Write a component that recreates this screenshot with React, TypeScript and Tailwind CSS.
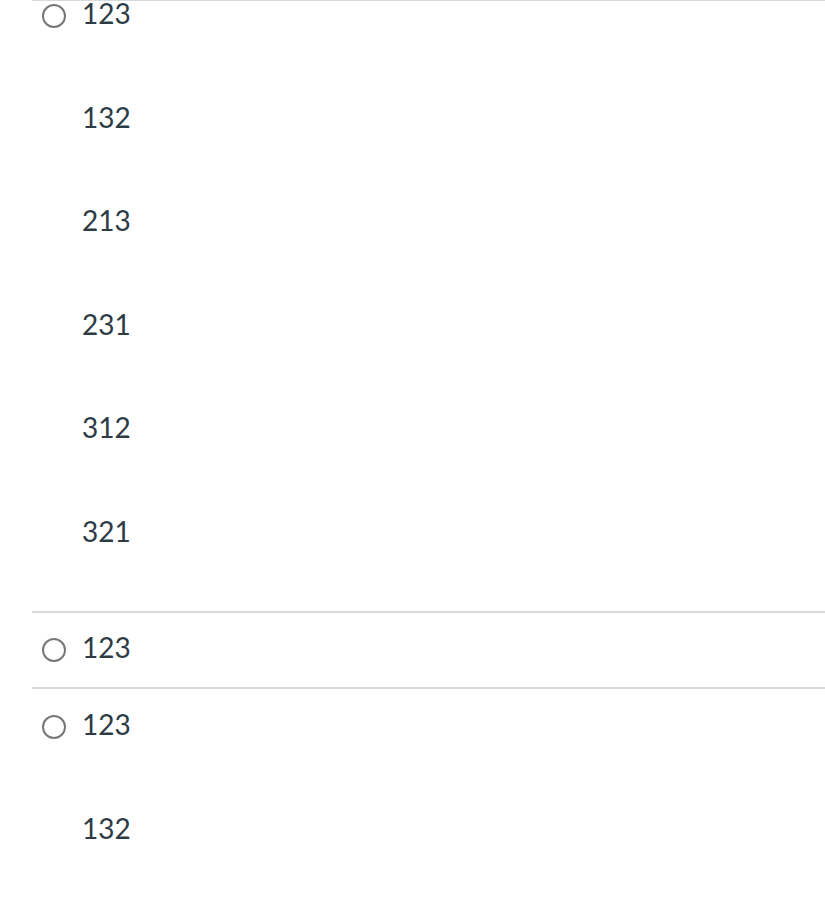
const blocks: { lines: string[]; pt: string; pb: string; line: string }[] = [
  { lines: ["123", "132", "213", "231", "312", "321"], pt: "pt-0", pb: "pb-[68px]", line: "h-px" },
  { lines: ["123"], pt: "pt-[22px]", pb: "pb-[25px]", line: "h-[2px]" },
  { lines: ["123", "132"], pt: "pt-[23px]", pb: "pb-[40px]", line: "h-[2px]" },
];

function Radio() {
  return (
    <span className="mt-[3px] block h-[24px] w-[24px] shrink-0 rounded-full border-2 border-[#777777] bg-white" />
  );
}

export default function App() {
  return (
    <div className="h-[906px] w-full overflow-hidden bg-white font-['Lato','Liberation_Sans',sans-serif] text-[#2d3b45]">
      <div className="ml-[32px] flex flex-col">
        {blocks.map((b, i) => (
          <div key={i}>
            <div className={`${b.line} w-full bg-[#dadada]`} />
            <div className={`flex items-start gap-[16px] pl-[10px] ${b.pt} ${b.pb}`}>
              <Radio />
              <div className="flex flex-col gap-[79.6px]">
                {b.lines.map((t) => (
                  <span key={t} className="text-[28px] leading-[24px]">
                    {t}
                  </span>
                ))}
              </div>
            </div>
          </div>
        ))}
      </div>
    </div>
  );
}
